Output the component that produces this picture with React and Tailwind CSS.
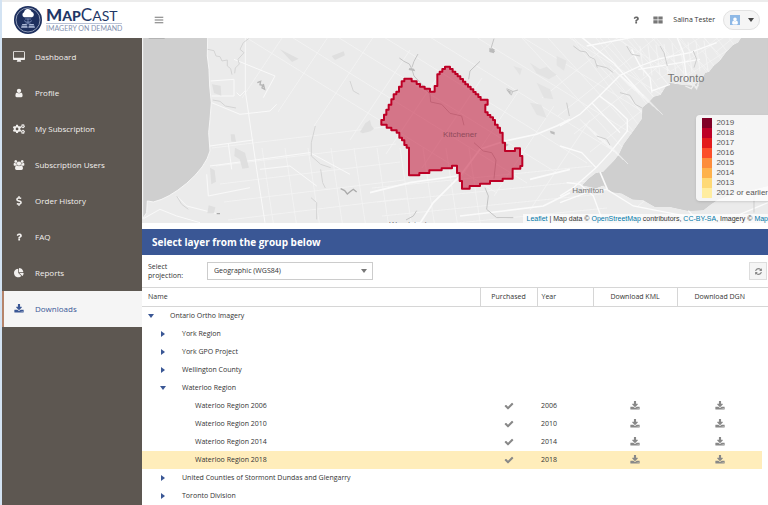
import React from "react";
import { FaCogs, FaDollarSign, FaSyncAlt } from "react-icons/fa";

const PATHS = {
  desktop:
    "M1664 960v-768q0-13-9-22t-23-10h-1472q-13 0-22 10t-10 22v768q0 13 10 22t22 10h1472q13 0 23-10t9-22zm128-768v1024q0 60-43 103t-103 43h-494q0 37 16 77t32 71 16 43q0 26-19 45t-45 19h-512q-26 0-45-19t-19-45q0-14 16-44t32-70 16-77h-494q-60 0-103-43t-43-103v-1024q0-60 43-103t103-43h1470q60 0 103 43t43 103z",
  user:
    "M1536 1399q0 109-62 187t-151 78h-854q-88 0-150-78t-63-187q0-85 9-160t31-152 59-131 94-89 134-35q131 128 313 128t313-128q76 0 135 35t94 89 58 131 31 152 9 160zm-256-887q0 159-112 271t-272 113-271-113-113-271 113-271 271-113 272 113 112 271z",
  users:
    "M593 896q-162 5-265 128h-134q-82 0-138-40.5t-56-118.500q0-353 124-353 6 0 43.500 21t97.500 42.500 119 21.500q67 0 133-23-5 37-5 66 0 139 81 256zm1071 637q0 120-73 189.500t-194 69.500h-874q-121 0-194-69.500t-73-189.500q0-53 3.500-103.500t14-109 26.500-108.500 43-97.500 62-81 85.500-53.500 111.500-20q10 0 43 21.500t73 48 107 48 135 21.500 135-21.500 107-48 73-48 43-21.500q61 0 111.500 20t85.500 53.500 62 81 43 97.500 26.500 108.500 14 109 3.500 103.500zm-1024-1277q0 106-75 181t-181 75-181-75-75-181 75-181 181-75 181 75 75 181zm704 384q0 159-112.500 271.500t-271.500 112.500-271.500-112.500-112.500-271.500 112.500-271.500 271.500-112.500 271.500 112.500 112.500 271.500zm576 225q0 78-56 118.500t-138 40.500h-134q-103-123-265-128 81-117 81-256 0-29-5-66 66 23 133 23 59 0 119-21.500t97.500-42.500 43.500-21q124 0 124 353zm-128-609q0 106-75 181t-181 75-181-75-75-181 75-181 181-75 181 75 75 181z",
  download:
    "M1344 1344q0-26-19-45t-45-19-45 19-19 45 19 45 45 19 45-19 19-45zm256 0q0-26-19-45t-45-19-45 19-19 45 19 45 45 19 45-19 19-45zm128-224v320q0 40-28 68t-68 28h-1472q-40 0-68-28t-28-68v-320q0-40 28-68t68-28h465l135 136q58 56 136 56t136-56l136-136h464q40 0 68 28t28 68zm-325-569q17 41-14 70l-448 448q-18 19-45 19t-45-19l-448-448q-31-29-14-70 17-39 59-39h256v-448q0-26 19-45t45-19h256q26 0 45 19t19 45v448h256q42 0 59 39z",
  check:
    "M1671 566q0 40-28 68l-724 724-136 136q-28 28-68 28t-68-28l-136-136-362-362q-28-28-28-68t28-68l136-136q28-28 68-28t68 28l294 295 656-657q28-28 68-28t68 28l136 136q28 28 28 68z",
  pie:
    "M768 890l546 546q-106 108-247 168t-299 60q-209 0-385-103t-280-279-103-386 103-385 280-280 385-103v762zm187 6h773q0 157-60 298t-168 248zm709-128h-768v-768q209 0 385 103t280 280 103 385z",
  question:
    "M1088 1256v240q0 16-12 28t-28 12h-240q-16 0-28-12t-12-28v-240q0-16 12-28t28-12h240q16 0 28 12t12 28zm316-600q0 54-15 101t-35 76-55 60-58 43-61 36q-41 23-68 65t-28 67q0 17-12 32t-28 16h-240q-15 0-25-19t-11-37v-45q0-83 65-157t143-108q59-27 84-56t25-76q0-42-46-74t-108-32q-65 0-108 29-35 25-107 115-13 16-31 16-12 0-25-8l-164-125q-13-10-15-25t5-28q160-266 464-266 80 0 161 31t146 83 106 127 41 159z",
  bars: "M128 320h1536v190h-1536zM128 800h1536v190h-1536zM128 1280h1536v190h-1536z",
  tiles: "M64 256h768v560h-768zM960 256h768v560h-768zM64 960h768v560h-768zM960 960h768v560h-768z",
};

function Icon({ name, className, width = 1792 }) {
  return (
    <svg viewBox={`0 0 ${width} 1792`} fill="currentColor" aria-hidden="true" className={className}>
      <path d={PATHS[name]} />
    </svg>
  );
}

function Caret({ dir = "down", className }) {
  return (
    <svg viewBox="0 0 6 6" fill="currentColor" aria-hidden="true" className={className}>
      <path d={dir === "down" ? "M0 1h6L3 5z" : "M1 0v6l4-3z"} />
    </svg>
  );
}

const NAV = [
  { label: "Dashboard", icon: <Icon name="desktop" className="size-3" /> },
  { label: "Profile", icon: <Icon name="user" className="size-2.5" /> },
  { label: "My Subscription", icon: <FaCogs className="size-3" /> },
  { label: "Subscription Users", icon: <Icon name="users" width={1920} className="h-2.5 w-3" /> },
  { label: "Order History", icon: <FaDollarSign className="size-2.5" /> },
  { label: "FAQ", icon: <Icon name="question" className="size-2.5" /> },
  { label: "Reports", icon: <Icon name="pie" className="size-2.5" /> },
  { label: "Downloads", icon: <Icon name="download" className="size-2.5" />, active: true },
];

function Logo() {
  return (
    <a href="#home" className="flex w-[140px] shrink-0 items-center gap-1 pl-3">
      <svg viewBox="0 0 84 84" className="size-7 shrink-0" aria-hidden="true">
        <circle cx="42" cy="42" r="42" fill="#1d2f5e" />
        <circle cx="42" cy="42" r="36" fill="none" stroke="#c3cbdd" strokeWidth="2" />
        <path d="M31 34a8 8 0 0 1-1-15 12 12 0 0 1 23-2 9 9 0 0 1 1 17z" fill="#fff" />
        <path d="M33 39h18M30 44l8 4h8l8-4M34 51h16M42 38v18" stroke="#8fa2cc" strokeWidth="2" fill="none" />
        <path d="M25 54h13l3 11H21zM46 54h13l4 11H43z" fill="#aebbd8" />
        <path d="M24 59h16M45 59h16" stroke="#1d2f5e" strokeWidth="2" />
      </svg>
      <span className="flex flex-col whitespace-nowrap font-[Lato,sans-serif] text-[#1f3766]">
        <span className="border-b border-[#b9c2d6] text-[14px] leading-[14px]">
          <b className="text-[17px] font-black">M</b>
          <b className="font-black">AP</b>
          <span className="text-[17px]">C</span>AST
        </span>
        <span className="text-[7px] leading-[8px] text-[#8391b0]">IMAGERY ON DEMAND</span>
      </span>
    </a>
  );
}

function Header() {
  return (
    <header className="flex h-[38px] shrink-0 items-center border-t-2 border-[#ececec] bg-white text-[#555]">
      <Logo />
      <button type="button" aria-label="Toggle menu" className="ml-3 text-[#777]">
        <Icon name="bars" className="size-2.5" />
      </button>
      <div className="ml-auto flex items-center pr-2">
        <button type="button" aria-label="Help" className="mr-3 text-[#666]">
          <Icon name="question" className="size-2.5" />
        </button>
        <button type="button" aria-label="Apps" className="mr-2.5 text-[#777]">
          <Icon name="tiles" className="size-2.5" />
        </button>
        <span className="mr-2 text-[7px] text-[#333]">Salina Tester</span>
        <button
          type="button"
          aria-label="Account"
          className="flex h-5 w-[37px] items-center justify-center gap-2 rounded-full border border-[#e2e2e2] bg-[#f5f5f5]"
        >
          <span className="flex size-2.5 items-end justify-center bg-[#8fb9e6] text-white">
            <Icon name="user" className="size-2" />
          </span>
          <Caret className="size-1.5 text-[#444]" />
        </button>
      </div>
    </header>
  );
}

function Sidebar() {
  return (
    <nav className="w-[140px] shrink-0 bg-[#5d5751] pt-px text-[8px] text-[#f2f0ee]">
      <ul>
        {NAV.map((item) => (
          <li key={item.label}>
            <a
              href={"#" + item.label.toLowerCase().replaceAll(" ", "-")}
              className={
                item.active
                  ? "flex h-9 items-center border-l-2 border-[#b5846b] bg-[#f5f5f5] pl-2 text-[#3a5795]"
                  : "flex h-9 items-center pl-2.5"
              }
            >
              <span className="mr-2.5 flex w-[13px] justify-center">{item.icon}</span>
              {item.label}
            </a>
          </li>
        ))}
      </ul>
    </nav>
  );
}

const BOUNDARY =
  "M103 128H125V136H140V144H150V152H164V158H180V167H194V150H202V115H209V107H217V99H225V92H240V99H248V107H256V114H263V121H271V129H279V137H286V145H294V152H302V160H310V168H317V175H325V183H332V191H353V206H346V229H353V237H361V244H369V252H375V266H383V275H390V290H398V320H405V345H435V337H450V360H457V390H451V398H428V428H398V435H360V443H330V450H299V458H276V435H269V411H261V389H246V397H215V403H178V411H148V418H117V335H110V327H103V313H96V305H88V290H80V283H64V275H50V266H34V252H42V236H49V221H56V206H64V190H71V175H79V167H87V152H95V136H103Z";

// Parallel road lines: count lines from (x, y), each stepped by (sx, sy), running (dx, dy).
function roads(x, y, sx, sy, dx, dy, count) {
  let d = "";
  for (let i = 0; i < count; i++) d += `M${x + sx * i} ${y + sy * i}l${dx} ${dy}`;
  return d;
}

const FINE =
  roads(560, 0, 7, 7, 90, -75, 18) + roads(430, 0, 9, -4, 130, 170, 18) + roads(510, 30, 5, 12, 110, -70, 12);
const COARSE =
  roads(105, 0, 30, -10, 250, 155, 9) + roads(100, 60, 36, 14, 60, -90, 9) + roads(380, 0, 26, 0, 110, 120, 8) +
  roads(400, 60, 16, 18, 100, -80, 7) + roads(70, 110, 4, 18, 180, -22, 5) + roads(120, 110, 23, 0, 12, 80, 10) +
  roads(230, 150, 5, 14, 220, -22, 4);

const LEGEND = [
  ["2019", "bg-[#800026]"],
  ["2018", "bg-[#bd0026]"],
  ["2017", "bg-[#e31a1c]"],
  ["2016", "bg-[#fc4e2a]"],
  ["2015", "bg-[#fd8d3c]"],
  ["2014", "bg-[#feb24c]"],
  ["2013", "bg-[#fed976]"],
  ["2012 or earlier", "bg-[#ffeda0]"],
];

function CoverageMap() {
  return (
    <section
      aria-label="Coverage map"
      className="relative h-[185px] shrink-0 overflow-hidden bg-[#ebebeb] font-['Liberation_Sans',Arial,sans-serif]"
    >
      <svg viewBox="0 0 626 185" preserveAspectRatio="xMinYMin slice" className="block size-full">
        <defs>
          <filter id="shore" x="-5%" y="-5%" width="110%" height="110%">
            <feDropShadow dx="0" dy="0" stdDeviation="2" floodColor="#999" floodOpacity="0.5" />
          </filter>
        </defs>
        <g fill="none">
          <path d={COARSE} stroke="#f4f4f4" strokeWidth="0.8" />
          <path d={FINE} stroke="#f5f5f5" strokeWidth="0.6" />
        </g>

        <g transform="translate(-2 -2) scale(0.3333)" fill="none">
          <path
            d="M8 0H203L202 60L207 100L209 150L214 200L210 250L206 290L210 345Q198 392 140 442Q85 488 40 498L22 495L20 530L8 548Z"
            fill="#cfcfcf"
            stroke="#f6f6f6"
            strokeWidth="3"
          />
          <path
            d="M316 0L316 165L350 400L375 560M212 135L282 130L282 180L215 180M215 200L300 235L390 225L410 205M282 70L405 120L370 185M290 170L300 180L315 165M10 548L60 520L110 540L180 560M110 480L140 510L230 533M360 400L450 390L530 450M210 330L340 312M210 390L510 350M510 350L630 415M200 415L205 480L330 455M265 322L275 400"
            stroke="#f9f9f9"
            strokeWidth="3"
          />
          <path
            d="M203 40L222 44L228 60L240 62L246 75L262 72L262 90L272 98L276 116M284 112L286 96L298 84L294 70L312 50L300 40L310 20L326 8M218 192L240 196L256 210L288 216M526 270L514 320L514 360L542 385L572 395M542 400L548 440L556 456M513 485L530 500L530 550M630 135L640 165L658 175M110 480L125 505L145 520"
            stroke="#d4d4d4"
            strokeWidth="3"
          />
          <path
            d="M285 335l30 15 12 45-20 3-8-28-16-10zM676 262l14-10 4 16 8 10-10 8-24 6-8-4zM272 295l12 0 4 22-14 0zM216 145l26 4 2 30-22-8zM210 395l14 8 4 34-14 8zM420 40l56 28-20 10zM575 60l36-14 4 12-30 14zM206 508l20 6-4 18-20 0z"
            fill="#dfdfdf"
          />
          <path d="M352 140l10-4-2 10 8 2-2 8 8 4-4-16" stroke="#b5b5b5" strokeWidth="4" />
          <path d="M602 458l12 6 8 10 10-8 8-6 10 8M230 533h10M26 6H74" stroke="#aaa" strokeWidth="4" />
        </g>

        <g transform="translate(418 -2) scale(0.3333)" fill="none">
          <path
            d="M548 0L535 20L520 28L500 48L480 75L462 90L448 108L436 112L428 128L400 150L370 148L330 142L318 152L302 178L282 183L266 200L248 215L246 250L228 275L192 325L178 355L165 372L130 408L108 412L85 430L68 448L108 456L130 448L155 468L185 472L218 490L250 492L285 512L330 512L385 524L430 522L452 505L475 490L540 468L590 458L624 450V0Z"
            fill="#cfcfcf"
            filter="url(#shore)"
          />
          <path d="M120 408L142 460" stroke="#fafafa" strokeWidth="5" />
          <path d="M376 150l18 8 8-12 8 12 6-20M404 156l12-8" stroke="#eee" strokeWidth="4" />
          <path
            d="M0 270L60 235L118 180L180 118L240 90L300 68L390 50L470 20M118 180L160 210L202 250L202 285L150 350L108 395L40 455L0 480M108 395L65 350L0 330M215 40L240 90L270 125L276 170M235 100L330 85L420 70M352 6L370 50L380 130M276 165L330 145M140 460L220 510L400 545L540 535L624 500M20 440L60 445L100 480L130 560M0 500L80 470L140 460M60 0L160 80L250 180M180 118L240 170M95 200L180 290M385 524L420 560M80 30L240 0"
            stroke="#fbfbfb"
            strokeWidth="4"
          />
          <path d={roads(150, 90, 14, 12, 60, 62, 8) + roads(60, 250, 14, 12, 60, 62, 7) + roads(240, 30, 24, -2, 12, 90, 9)} stroke="#f8f8f8" strokeWidth="2" />
          <path
            d="M40 30L60 45L78 48L88 62L104 70L112 95M110 88L140 95L160 110M200 30L215 55L240 60M180 170L210 178L226 205L246 216M110 300L140 310L150 328M20 200L28 240M300 30L312 50L322 90M400 45L410 70L402 95"
            stroke="#cdcdcd"
            strokeWidth="3"
          />
          <path d="M415 370L624 232M528 365L582 460V530" stroke="#d0d0d0" strokeWidth="3" />
        </g>

        <g transform="translate(228 -2) scale(0.3333)" fill="none">
          <path
            d="M150 562L190 500L270 420L330 340L405 315L500 295L560 270L600 250M270 540L400 525L520 510L600 470M0 470L120 440L260 420M480 430L600 400M150 560L120 562"
            stroke="#fafafa"
            strokeWidth="5"
          />
          <path
            d="M88 66L102 76L118 84L126 100M144 54L132 76L126 94M126 100L132 120L160 150L180 175L182 198L215 205L240 232L275 240L282 268M372 8L364 34L374 48L366 40M330 76L300 105L296 130M410 158L428 166L424 178M424 168L444 162M312 320L340 345L365 350L378 372L372 428M345 455L355 480L350 520L380 545L430 545M140 524L130 540L108 552"
            stroke="#c4c4c4"
            strokeWidth="3"
          />
          <path d="M118 96l14 2 4 8-20-4zM358 36l16 4-2 12-14-4zM408 160l14 6 0 12zM540 284l14 4 0 8-12-4zM406 322l10 4-8 6z" fill="#bbb" />
          <path
            d="M480 80l30 20 20-8 30 24-24 14-36-18zM500 140l40 20 10 30-28-4zM480 200l34 6 16 40-30-10zM560 60l30 14-8 30-22-16zM430 90l26 8-6 20z"
            fill="#e3e3e3"
          />
          <path d={BOUNDARY} fill="#bd0026" fillOpacity="0.5" stroke="#bd0026" strokeWidth="6" strokeLinejoin="round" />
        </g>

        <g fill="#777" textAnchor="middle">
          <text x="318" y="99" fontSize="8" fill="#8f4a5a">Kitchener</text>
          <text x="544" y="44" fontSize="11">Toronto</text>
          <text x="446" y="155" fontSize="8">Hamilton</text>
          <text x="267" y="189" fontSize="8">Woodstock</text>
        </g>
      </svg>

      <ul className="absolute -right-2 top-[77px] flex flex-col rounded-sm bg-white/80 py-[3px] pl-1.5 pr-2 text-[8px] leading-[10px] text-[#555] shadow">
        {LEGEND.map(([year, color]) => (
          <li key={year} className="flex whitespace-nowrap">
            <span className={"mr-1 w-2.5 " + color} />
            {year}
          </li>
        ))}
      </ul>

      <p className="absolute bottom-0 right-0 whitespace-nowrap bg-white/70 pl-1 text-[7px] leading-[9px] text-[#333]">
        <a href="#leaflet" className="text-[#0078a8]">Leaflet</a> | Map data ©{" "}
        <a href="#osm" className="text-[#0078a8]">OpenStreetMap</a> contributors,{" "}
        <a href="#license" className="text-[#0078a8]">CC-BY-SA</a>, Imagery ©{" "}
        <a href="#mapbox" className="text-[#0078a8]">Map</a>
      </p>
    </section>
  );
}

const ROWS = [
  { name: "Ontario Ortho Imagery", level: 0, open: true },
  { name: "York Region", level: 1 },
  { name: "York GPO Project", level: 1 },
  { name: "Wellington County", level: 1 },
  { name: "Waterloo Region", level: 1, open: true },
  { name: "Waterloo Region 2006", level: 2, year: "2006" },
  { name: "Waterloo Region 2010", level: 2, year: "2010" },
  { name: "Waterloo Region 2014", level: 2, year: "2014" },
  { name: "Waterloo Region 2018", level: 2, year: "2018", selected: true },
  { name: "United Counties of Stormont Dundas and Glengarry", level: 1 },
  { name: "Toronto Division", level: 1 },
];

const INDENT = ["pl-1.5", "pl-[18px]", "pl-[53px]"];

function DownloadCell({ row, format, className }) {
  return (
    <td className={className}>
      {row.year && (
        <button type="button" aria-label={`Download ${row.name} ${format}`} className="block w-full text-[#888]">
          <Icon name="download" className="mx-auto size-2.5" />
        </button>
      )}
    </td>
  );
}

function LayerTable() {
  return (
    <table className="w-full table-fixed border-collapse text-[7px] leading-[12px] text-[#333]">
      <colgroup>
        <col />
        <col className="w-[57px]" />
        <col className="w-[56px]" />
        <col className="w-[84px]" />
        <col className="w-[85px]" />
        <col className="w-1.5" />
      </colgroup>
      <thead>
        <tr className="h-[19px] border-y border-[#d6d6d6] [&>th]:p-0 [&>th]:font-normal">
          <th scope="col" className="text-left"><span className="pl-1.5">Name</span></th>
          <th scope="col" className="border-x border-[#d6d6d6]">Purchased</th>
          <th scope="col" className="text-left"><span className="pl-1">Year</span></th>
          <th scope="col" className="border-x border-[#d6d6d6]">Download KML</th>
          <th scope="col">Download DGN</th>
          <td />
        </tr>
      </thead>
      <tbody>
        {ROWS.map((row) => {
          const cell = row.selected ? "bg-[#ffedbb] p-0" : "p-0";
          return (
            <tr key={row.name} className="h-[18px]">
              <td className={cell}>
                <div className={"flex items-center whitespace-nowrap " + INDENT[row.level]}>
                  {row.level < 2 && (
                    <button type="button" aria-label={"Toggle " + row.name} className="mr-4 text-[#3a5795]">
                      <Caret dir={row.open ? "down" : "right"} className="block size-1.5" />
                    </button>
                  )}
                  {row.name}
                </div>
              </td>
              <td className={cell}>
                {row.year && <Icon name="check" className="mx-auto block size-2.5 text-[#888]" />}
              </td>
              <td className={cell}><span className="pl-1">{row.year}</span></td>
              <DownloadCell row={row} format="KML" className={cell} />
              <DownloadCell row={row} format="DGN" className={cell} />
              <td className="p-0" />
            </tr>
          );
        })}
      </tbody>
    </table>
  );
}

export default function App() {
  return (
    <div className="flex h-screen flex-col overflow-hidden border-l-2 border-[#d3e3f3] bg-white font-['Open_Sans',sans-serif]">
      <Header />
      <div className="flex min-h-0 flex-1">
        <Sidebar />
        <main className="flex min-w-0 flex-1 flex-col bg-white">
          <CoverageMap />
          <h1 className="mt-1.5 flex h-[26px] shrink-0 items-center bg-[#3a5795] px-2.5 text-[10px] font-bold text-white">
            Select layer from the group below
          </h1>
          <div className="flex h-8 shrink-0 items-center pl-1.5">
            <label htmlFor="projection" className="w-[59px] pr-4 text-[7px] leading-[9px] text-[#333]">
              Select projection:
            </label>
            <div className="relative">
              <select
                id="projection"
                className="block h-[18px] w-[166px] appearance-none border border-[#ccc] bg-white px-1.5 text-[7px] text-[#333]"
              >
                <option>Geographic (WGS84)</option>
              </select>
              <Caret className="pointer-events-none absolute right-1.5 top-1.5 size-1.5 text-[#777]" />
            </div>
            <button
              type="button"
              aria-label="Refresh"
              className="ml-auto mr-px flex size-[18px] items-center justify-center border border-[#ddd] bg-[#f5f5f5] text-[#888]"
            >
              <FaSyncAlt className="size-[7px]" />
            </button>
          </div>
          <LayerTable />
        </main>
      </div>
    </div>
  );
}
